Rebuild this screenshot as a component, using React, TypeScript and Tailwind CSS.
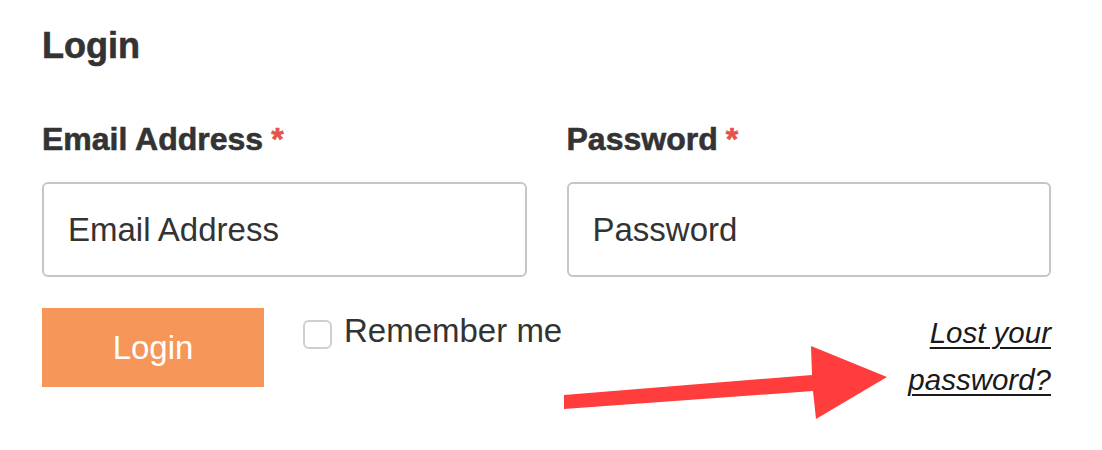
import React from 'react'

const font = { fontFamily: '"Liberation Sans", Arial, sans-serif' }

function Field({ label, type, placeholder }: { label: string; type: string; placeholder: string }) {
  return (
    <div className="flex flex-col">
      <label className="text-[32px] leading-[36px] font-bold text-[#333] [-webkit-text-stroke:0.6px_#333]">
        {label}
        <span className="ml-[8px] text-[#e5534b] [-webkit-text-stroke:0.6px_#e5534b]">*</span>
      </label>
      <input
        type={type}
        placeholder={placeholder}
        className="mt-[25px] h-[95px] w-full rounded-[6px] border-2 border-[#c6c6c6] bg-white px-[24px] text-[33px] text-[#333] placeholder:text-[#333] outline-none"
      />
    </div>
  )
}

export default function App() {
  return (
    <div className="relative h-[450px] w-[1102px] overflow-hidden bg-white px-[42px]" style={font}>
      <h2 className="pt-[26px] text-[36px] leading-[40px] font-bold text-[#333] [-webkit-text-stroke:0.6px_#333]">Login</h2>

      <div className="mt-[55px] grid w-[1009px] grid-cols-2 gap-x-[40px]">
        <Field label="Email Address" type="email" placeholder="Email Address" />
        <Field label="Password" type="password" placeholder="Password" />
      </div>

      <div className="mt-[31px] flex w-[1009px] items-start">
        <button className="h-[79px] w-[222px] bg-[#f79659] text-[33px] text-white">Login</button>
        <label className="mt-[3px] ml-[39px] flex items-start gap-[12px] text-[33px] leading-[40px] text-[#333]">
          <span className="mt-[9px] block h-[29px] w-[29px] rounded-[6px] border-2 border-[#cfcfcf] bg-white" />
          Remember me
        </label>
        <a
          href="#"
          className="mt-[1px] ml-auto w-[165px] text-right text-[29.5px] leading-[47px] italic text-[#1a1a1a] underline decoration-2 underline-offset-[4px]"
        >
          Lost your password?
        </a>
      </div>

      <svg className="pointer-events-none absolute top-0 left-0" width="1102" height="450" viewBox="0 0 1102 450">
        <polygon
          points="564,395 812,375 811,346 887,377 816,419 813,391 564,409"
          fill="#ff3d3d"
        />
      </svg>
    </div>
  )
}
